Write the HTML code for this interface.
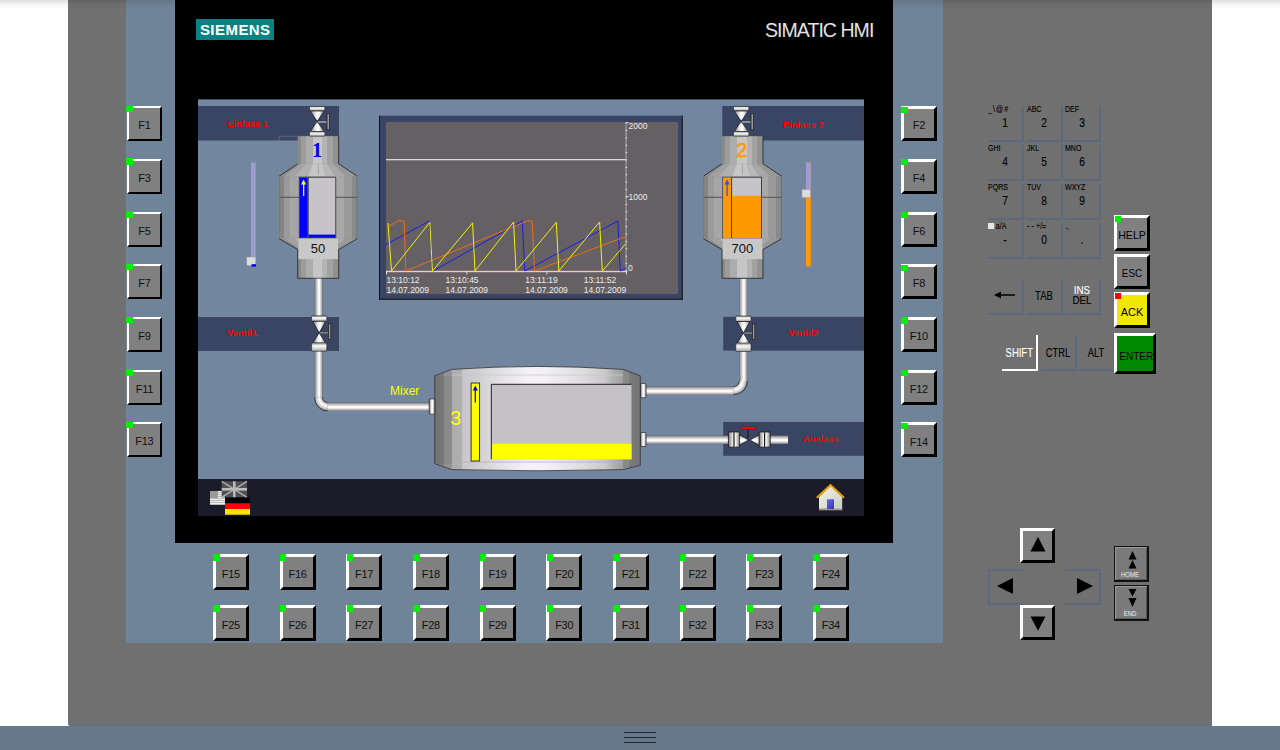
<!DOCTYPE html>
<html><head><meta charset="utf-8"><style>
*{margin:0;padding:0;box-sizing:border-box}
html,body{width:1280px;height:750px;overflow:hidden;background:#fff;font-family:"Liberation Sans",sans-serif}
.abs{position:absolute}
.fk{position:absolute;width:36px;height:35.5px;background:#808080;border-style:solid;border-width:3px;border-color:#fff #000 #000 #fff;color:#111;font-size:11px;letter-spacing:-.3px;text-indent:-.3px;text-align:center;line-height:30px;padding-top:1.5px}
.fk i{position:absolute;left:-2.6px;top:-2.6px;width:6.2px;height:6.2px;background:#00f000}
.fk.r{height:35px;padding-top:1.2px}
.fk.l{width:35px;height:35px;padding-top:2px;border-width:2.5px 2.6px 2.6px 2.4px;line-height:31px}
.fk.l i{left:-3px;top:-2.5px;width:6.6px;height:6.6px}
.kp{position:absolute;width:36px;height:35.5px;border-right:2.2px solid #5b6a7c;border-bottom:2.5px solid #5b6a7c}
.kp .s{position:absolute;left:0;top:-1.2px;font-size:9px;line-height:9px;color:#000;-webkit-text-stroke-width:.12px;transform:scaleX(.78);transform-origin:0 0;white-space:nowrap}
.kp .d{position:absolute;left:0;width:34px;top:11px;font-size:12px;line-height:12px;color:#000;text-align:center;transform:scaleX(.85);-webkit-text-stroke-width:.12px}
.bt{position:absolute;width:36px;height:35.5px;background:#808080;border-style:solid;border-width:3px;border-color:#fff #000 #000 #fff;color:#000;font-size:11.5px;text-align:center}
.bt span{display:block;transform:scaleX(.82)}
</style></head><body>

<div class="abs" style="left:68px;top:0;width:1144px;height:726px;background:#707070;border-radius:0 0 0 2px"></div>
<div class="abs" style="left:126px;top:0;width:817px;height:643px;background:#6f8498"></div>
<div class="abs" style="left:175px;top:0;width:718px;height:543px;background:#000"></div>
<div class="abs" style="left:0;top:726px;width:1280px;height:24px;background:#667889"></div>
<div class="abs" style="left:624px;top:732px;width:32px;height:1.2px;background:#1e2834"></div>
<div class="abs" style="left:624px;top:737px;width:32px;height:1.2px;background:#1e2834"></div>
<div class="abs" style="left:624px;top:742px;width:32px;height:1.2px;background:#1e2834"></div>
<div class="abs" style="left:0;top:0;width:1280px;height:9px;background:linear-gradient(rgba(0,0,0,.12),rgba(0,0,0,.03) 55%,rgba(0,0,0,0))"></div>
<div class="abs" style="left:196px;top:19px;width:78px;height:21px;background:#078383;color:#fff;font-weight:bold;font-size:15px;line-height:22px;text-align:center;letter-spacing:.45px;text-indent:.5px">SIEMENS</div>
<div class="abs" style="left:765px;top:18px;width:120px;font-size:19.5px;line-height:24px;color:#e4e4e4;white-space:nowrap;letter-spacing:-.95px">SIMATIC HMI</div>
<div class="fk l" style="left:127.0px;top:106.2px"><i></i>F1</div>
<div class="fk r" style="left:901.0px;top:106.2px"><i></i>F2</div>
<div class="fk l" style="left:127.0px;top:158.9px"><i></i>F3</div>
<div class="fk r" style="left:901.0px;top:158.9px"><i></i>F4</div>
<div class="fk l" style="left:127.0px;top:211.6px"><i></i>F5</div>
<div class="fk r" style="left:901.0px;top:211.6px"><i></i>F6</div>
<div class="fk l" style="left:127.0px;top:264.3px"><i></i>F7</div>
<div class="fk r" style="left:901.0px;top:264.3px"><i></i>F8</div>
<div class="fk l" style="left:127.0px;top:317.0px"><i></i>F9</div>
<div class="fk r" style="left:901.0px;top:317.0px"><i></i>F10</div>
<div class="fk l" style="left:127.0px;top:369.7px"><i></i>F11</div>
<div class="fk r" style="left:901.0px;top:369.7px"><i></i>F12</div>
<div class="fk l" style="left:127.0px;top:422.4px"><i></i>F13</div>
<div class="fk r" style="left:901.0px;top:422.4px"><i></i>F14</div>
<div class="fk" style="left:213.0px;top:554.0px"><i></i>F15</div>
<div class="fk" style="left:213.0px;top:605.0px"><i></i>F25</div>
<div class="fk" style="left:279.7px;top:554.0px"><i></i>F16</div>
<div class="fk" style="left:279.7px;top:605.0px"><i></i>F26</div>
<div class="fk" style="left:346.3px;top:554.0px"><i></i>F17</div>
<div class="fk" style="left:346.3px;top:605.0px"><i></i>F27</div>
<div class="fk" style="left:413.0px;top:554.0px"><i></i>F18</div>
<div class="fk" style="left:413.0px;top:605.0px"><i></i>F28</div>
<div class="fk" style="left:479.7px;top:554.0px"><i></i>F19</div>
<div class="fk" style="left:479.7px;top:605.0px"><i></i>F29</div>
<div class="fk" style="left:546.4px;top:554.0px"><i></i>F20</div>
<div class="fk" style="left:546.4px;top:605.0px"><i></i>F30</div>
<div class="fk" style="left:613.0px;top:554.0px"><i></i>F21</div>
<div class="fk" style="left:613.0px;top:605.0px"><i></i>F31</div>
<div class="fk" style="left:679.7px;top:554.0px"><i></i>F22</div>
<div class="fk" style="left:679.7px;top:605.0px"><i></i>F32</div>
<div class="fk" style="left:746.4px;top:554.0px"><i></i>F23</div>
<div class="fk" style="left:746.4px;top:605.0px"><i></i>F33</div>
<div class="fk" style="left:813.0px;top:554.0px"><i></i>F24</div>
<div class="fk" style="left:813.0px;top:605.0px"><i></i>F34</div>
<svg class="abs" style="left:0;top:0" width="1280" height="750" viewBox="0 0 1280 750" font-family="Liberation Sans, sans-serif">
<defs>
<linearGradient id="pipeV" x1="0" x2="1" y1="0" y2="0">
 <stop offset="0" stop-color="#6c6c6c"/><stop offset=".15" stop-color="#a8a8a8"/><stop offset=".45" stop-color="#f4f4f4"/><stop offset=".6" stop-color="#ffffff"/><stop offset=".85" stop-color="#b8b8b8"/><stop offset="1" stop-color="#707070"/>
</linearGradient>
<linearGradient id="pipeH" x1="0" x2="0" y1="0" y2="1">
 <stop offset="0" stop-color="#6c6c6c"/><stop offset=".15" stop-color="#a8a8a8"/><stop offset=".45" stop-color="#f4f4f4"/><stop offset=".6" stop-color="#ffffff"/><stop offset=".85" stop-color="#b8b8b8"/><stop offset="1" stop-color="#707070"/>
</linearGradient>
<linearGradient id="neck" x1="0" x2="1">
 <stop offset="0" stop-color="#8a8a8a"/><stop offset=".08" stop-color="#8a8a8a"/><stop offset=".08" stop-color="#9c9c9c"/><stop offset=".2" stop-color="#9c9c9c"/><stop offset=".2" stop-color="#acacac"/><stop offset=".37" stop-color="#acacac"/><stop offset=".37" stop-color="#c6c6c6"/><stop offset=".6" stop-color="#c6c6c6"/><stop offset=".6" stop-color="#b4b4b4"/><stop offset=".72" stop-color="#b4b4b4"/><stop offset=".72" stop-color="#a2a2a2"/><stop offset=".86" stop-color="#a2a2a2"/><stop offset=".86" stop-color="#929292"/><stop offset="1" stop-color="#909090"/>
</linearGradient>
<linearGradient id="body" x1="0" x2="1">
 <stop offset="0" stop-color="#858585"/><stop offset=".06" stop-color="#858585"/><stop offset=".06" stop-color="#9a9a9a"/><stop offset=".14" stop-color="#9a9a9a"/><stop offset=".14" stop-color="#a6a6a6"/><stop offset=".26" stop-color="#a6a6a6"/><stop offset=".26" stop-color="#b0b0b0"/><stop offset=".74" stop-color="#b0b0b0"/><stop offset=".74" stop-color="#a8a8a8"/><stop offset=".83" stop-color="#a8a8a8"/><stop offset=".83" stop-color="#9a9a9a"/><stop offset=".93" stop-color="#9a9a9a"/><stop offset=".93" stop-color="#8a8a8a"/><stop offset="1" stop-color="#8a8a8a"/>
</linearGradient>
<linearGradient id="cone" x1="0" x2="1">
 <stop offset="0" stop-color="#8e8e8e"/><stop offset=".2" stop-color="#a4a4a4"/><stop offset=".35" stop-color="#b4b4b4"/><stop offset=".42" stop-color="#c8c8c8"/><stop offset=".62" stop-color="#c8c8c8"/><stop offset=".7" stop-color="#b4b4b4"/><stop offset=".85" stop-color="#a0a0a0"/><stop offset="1" stop-color="#8e8e8e"/>
</linearGradient>
<linearGradient id="mix" x1="0" x2="1">
 <stop offset="0" stop-color="#7a7a7a"/><stop offset=".045" stop-color="#7e7e7e"/><stop offset=".047" stop-color="#929292"/><stop offset=".083" stop-color="#949494"/><stop offset=".085" stop-color="#acacac"/><stop offset=".13" stop-color="#b0b0b0"/><stop offset=".133" stop-color="#c8c6ca"/><stop offset=".2" stop-color="#cecdd0"/><stop offset=".3" stop-color="#e0dee2"/><stop offset=".45" stop-color="#f4f2f6"/><stop offset=".55" stop-color="#f2f0f4"/><stop offset=".72" stop-color="#dedcde"/><stop offset=".83" stop-color="#cac8ca"/><stop offset=".87" stop-color="#b0b0b0"/><stop offset=".915" stop-color="#a0a0a0"/><stop offset=".918" stop-color="#8a8a8a"/><stop offset=".945" stop-color="#888"/><stop offset=".948" stop-color="#7a7a7a"/><stop offset="1" stop-color="#747474"/>
</linearGradient>
<linearGradient id="flange" x1="0" x2="1">
 <stop offset="0" stop-color="#777"/><stop offset=".4" stop-color="#eee"/><stop offset=".6" stop-color="#fff"/><stop offset="1" stop-color="#888"/>
</linearGradient>
<linearGradient id="flangeH" x1="0" x2="0" y1="0" y2="1">
 <stop offset="0" stop-color="#777"/><stop offset=".4" stop-color="#eee"/><stop offset=".6" stop-color="#fff"/><stop offset="1" stop-color="#888"/>
</linearGradient>
<linearGradient id="flangeH2" x1="0" x2="0" y1="0" y2="1"><stop offset="0" stop-color="#888"/><stop offset=".35" stop-color="#fafafa"/><stop offset=".6" stop-color="#e0e0e0"/><stop offset="1" stop-color="#999"/></linearGradient>
<linearGradient id="ukg" x1="0" x2="0" y1="0" y2="1"><stop offset="0" stop-color="#555"/><stop offset="1" stop-color="#444"/></linearGradient>
<linearGradient id="house" x1="0" x2="1" y1="0" y2="1"><stop offset="0" stop-color="#f4f4ec"/><stop offset="1" stop-color="#c8ccc0"/></linearGradient>
<linearGradient id="door" x1="0" x2="1" y1="0" y2="1"><stop offset="0" stop-color="#6a6af0"/><stop offset="1" stop-color="#3030b0"/></linearGradient>
</defs>
<rect x="198" y="99.4" width="666" height="379.6" fill="#7386a0"/>
<rect x="198" y="479" width="666" height="37" fill="#1b1b2a"/>
<rect x="198" y="106" width="141" height="34.5" fill="#3a4564"/>
<rect x="722.3" y="106" width="141.7" height="34.5" fill="#3a4564"/>
<rect x="198" y="317" width="141" height="34" fill="#3a4564"/>
<rect x="723.2" y="316.8" width="140.8" height="33.8" fill="#3a4564"/>
<rect x="723.2" y="422" width="140.8" height="33.8" fill="#3a4564"/>
<text x="227.5" y="127.3" font-size="9.3" font-weight="bold" fill="#f00">Einlass 1</text>
<text x="783" y="128" font-size="9.3" font-weight="bold" fill="#f00">Einlass 2</text>
<text x="227" y="336.2" font-size="9.3" font-weight="bold" fill="#f00">Ventil1</text>
<text x="788.3" y="335.8" font-size="9.3" font-weight="bold" fill="#f00">Ventil2</text>
<text x="803" y="442.2" font-size="9.3" font-weight="bold" fill="#f00">Auslass</text>
<rect x="379" y="115.7" width="303.7" height="184" fill="#3a4566"/>
<rect x="379" y="115.7" width="1" height="184" fill="#111"/>
<rect x="681.7" y="115.7" width="1" height="184" fill="#111"/>
<rect x="379" y="298.7" width="303.7" height="1" fill="#111"/>
<rect x="386" y="122" width="292" height="172" fill="#646064"/>
<rect x="386" y="159" width="240" height="1.3" fill="#d8d8d8"/>
<rect x="625.6" y="122.5" width="0.9" height="149" fill="#b8b8b8"/>
<rect x="625.6" y="122.5" width="1.6" height="1" fill="#e8e8e8"/>
<rect x="625.6" y="129.9" width="1.6" height="1" fill="#e8e8e8"/>
<rect x="625.6" y="137.3" width="1.6" height="1" fill="#e8e8e8"/>
<rect x="625.6" y="144.7" width="1.6" height="1" fill="#e8e8e8"/>
<rect x="625.6" y="152.1" width="1.6" height="1" fill="#e8e8e8"/>
<rect x="625.6" y="159.5" width="1.6" height="1" fill="#e8e8e8"/>
<rect x="625.6" y="166.9" width="1.6" height="1" fill="#e8e8e8"/>
<rect x="625.6" y="174.3" width="1.6" height="1" fill="#e8e8e8"/>
<rect x="625.6" y="181.7" width="1.6" height="1" fill="#e8e8e8"/>
<rect x="625.6" y="189.1" width="1.6" height="1" fill="#e8e8e8"/>
<rect x="625.6" y="196.5" width="1.6" height="1" fill="#e8e8e8"/>
<rect x="625.6" y="203.9" width="1.6" height="1" fill="#e8e8e8"/>
<rect x="625.6" y="211.3" width="1.6" height="1" fill="#e8e8e8"/>
<rect x="625.6" y="218.7" width="1.6" height="1" fill="#e8e8e8"/>
<rect x="625.6" y="226.1" width="1.6" height="1" fill="#e8e8e8"/>
<rect x="625.6" y="233.5" width="1.6" height="1" fill="#e8e8e8"/>
<rect x="625.6" y="240.9" width="1.6" height="1" fill="#e8e8e8"/>
<rect x="625.6" y="248.3" width="1.6" height="1" fill="#e8e8e8"/>
<rect x="625.6" y="255.7" width="1.6" height="1" fill="#e8e8e8"/>
<rect x="625.6" y="263.1" width="1.6" height="1" fill="#e8e8e8"/>
<rect x="625.6" y="270.5" width="1.6" height="1" fill="#e8e8e8"/>
<rect x="626" y="122.3" width="3" height="0.8" fill="#ddd"/>
<rect x="626" y="196.2" width="3" height="0.8" fill="#ddd"/>
<text x="628.5" y="129.2" font-size="8.5" fill="#ececec">2000</text>
<text x="628.5" y="199.8" font-size="8.5" fill="#ececec">1000</text>
<text x="628" y="271.2" font-size="8.5" fill="#ececec">0</text>
<rect x="386" y="270.8" width="240.5" height="1.4" fill="#f4c8c8"/>
<rect x="386" y="271" width="0.9" height="3.5" fill="#e8e8e8"/>
<rect x="466.4" y="271" width="0.9" height="3.5" fill="#e8e8e8"/>
<rect x="546.5" y="271" width="0.9" height="3.5" fill="#e8e8e8"/>
<rect x="626" y="271" width="0.9" height="3.5" fill="#e8e8e8"/>
<text x="386.5" y="283" font-size="8.5" fill="#ececec">13:10:12</text>
<text x="386.5" y="293" font-size="8.5" fill="#ececec">14.07.2009</text>
<text x="445.5" y="283" font-size="8.5" fill="#ececec">13:10:45</text>
<text x="445.5" y="293" font-size="8.5" fill="#ececec">14.07.2009</text>
<text x="525.3" y="283" font-size="8.5" fill="#ececec">13:11:19</text>
<text x="525.3" y="293" font-size="8.5" fill="#ececec">14.07.2009</text>
<text x="583.7" y="283" font-size="8.5" fill="#ececec">13:11:52</text>
<text x="583.7" y="293" font-size="8.5" fill="#ececec">14.07.2009</text>
<polyline points="386,244.6 429.2,221.1 433,271 522.3,221 524.8,271 617.8,221 620.3,271 626,268" fill="none" stroke="#1c1ce8" stroke-width="1.0" stroke-linejoin="round"/>
<polyline points="388,226.4 392,224.5 398,221 404,221 406,271 527,221 532.2,221 534.5,271 626,236.4" fill="none" stroke="#f06c14" stroke-width="1.0" stroke-linejoin="round"/>
<polyline points="388,223 391.5,271 429.8,222.3 432.5,271 472.6,222.9 475,271 513.6,222 516,271 556.3,222.3 558.8,271 599.6,222 602.3,271 626,243.4" fill="none" stroke="#f4f000" stroke-width="1.0" stroke-linejoin="round"/>
<rect x="314.6" y="278.7" width="8" height="39.30000000000001" fill="url(#pipeV)"/>
<rect x="314.6" y="350" width="8" height="47.60000000000002" fill="url(#pipeV)"/>
<rect x="327.5" y="402.5" width="103.5" height="8.5" fill="url(#pipeH)"/>
<radialGradient id="elb1" gradientUnits="userSpaceOnUse" cx="327.5" cy="397.5" r="13.5"><stop offset="0" stop-color="#777"/><stop offset=".37" stop-color="#8a8a8a"/><stop offset=".45" stop-color="#c8c8c8"/><stop offset=".62" stop-color="#ffffff"/><stop offset=".85" stop-color="#c4c4c4"/><stop offset="1" stop-color="#6a6a6a"/></radialGradient>
<path d="M314.6 397.5 A12.9 13.5 0 0 0 327.5 411 L327.5 402.5 A4.9 5 0 0 1 322.6 397.5Z" fill="url(#elb1)"/>
<path d="M314.6 397.5 A12.9 13.5 0 0 0 327.5 411 M327.5 402.5 A4.9 5 0 0 1 322.6 397.5" fill="none" stroke="#1a1a1a" stroke-width=".7"/>
<rect x="739.3" y="278.7" width="8" height="39.30000000000001" fill="url(#pipeV)"/>
<rect x="739.3" y="350" width="8" height="31.100000000000023" fill="url(#pipeV)"/>
<rect x="644" y="386.5" width="89.5" height="8.5" fill="url(#pipeH)"/>
<radialGradient id="elb2" gradientUnits="userSpaceOnUse" cx="733.5" cy="381" r="14"><stop offset="0" stop-color="#777"/><stop offset=".38" stop-color="#8a8a8a"/><stop offset=".45" stop-color="#c8c8c8"/><stop offset=".62" stop-color="#ffffff"/><stop offset=".85" stop-color="#c4c4c4"/><stop offset="1" stop-color="#6a6a6a"/></radialGradient>
<path d="M747.5 381 A14 13.6 0 0 1 733.5 394.6 L733.5 386.5 A5.8 5.5 0 0 0 739.3 381Z" fill="url(#elb2)"/>
<path d="M747.5 381 A14 13.6 0 0 1 733.5 394.6 M733.5 386.5 A5.8 5.5 0 0 0 739.3 381" fill="none" stroke="#1a1a1a" stroke-width=".7"/>
<rect x="644" y="435.5" width="85" height="8.5" fill="url(#pipeH)"/>
<rect x="770" y="435.5" width="18" height="8.5" fill="url(#pipeH)"/>
<rect x="279.0" y="136.2" width="78.4" height="102.4" fill="none" stroke="#8a8a8a" stroke-width=".6" opacity=".7"/>
<g>
<linearGradient id="n318" gradientUnits="userSpaceOnUse" x1="297.7" x2="338.7" y1="0" y2="0"><stop offset="0" stop-color="#8a8a8a"/><stop offset=".08" stop-color="#8a8a8a"/><stop offset=".08" stop-color="#9c9c9c"/><stop offset=".2" stop-color="#9c9c9c"/><stop offset=".2" stop-color="#acacac"/><stop offset=".37" stop-color="#acacac"/><stop offset=".37" stop-color="#c6c6c6"/><stop offset=".6" stop-color="#c6c6c6"/><stop offset=".6" stop-color="#b4b4b4"/><stop offset=".72" stop-color="#b4b4b4"/><stop offset=".72" stop-color="#a2a2a2"/><stop offset=".86" stop-color="#a2a2a2"/><stop offset=".86" stop-color="#929292"/><stop offset="1" stop-color="#909090"/></linearGradient>
<linearGradient id="b318" gradientUnits="userSpaceOnUse" x1="279.0" x2="357.4" y1="0" y2="0"><stop offset="0" stop-color="#858585"/><stop offset=".06" stop-color="#858585"/><stop offset=".06" stop-color="#9a9a9a"/><stop offset=".14" stop-color="#9a9a9a"/><stop offset=".14" stop-color="#a6a6a6"/><stop offset=".26" stop-color="#a6a6a6"/><stop offset=".26" stop-color="#b0b0b0"/><stop offset=".74" stop-color="#b0b0b0"/><stop offset=".74" stop-color="#a8a8a8"/><stop offset=".83" stop-color="#a8a8a8"/><stop offset=".83" stop-color="#9a9a9a"/><stop offset=".93" stop-color="#9a9a9a"/><stop offset=".93" stop-color="#8a8a8a"/><stop offset="1" stop-color="#8a8a8a"/></linearGradient>
<rect x="297.7" y="136.2" width="41.0" height="27.600000000000023" fill="url(#n318)"/>
<rect x="297.7" y="249.5" width="41.0" height="28.80000000000001" fill="url(#n318)"/>
<path d="M297.70 163.8 L300.57 163.8 L284.49 176.3 L279.00 176.3Z" fill="#8e8e8e" stroke="#8e8e8e" stroke-width=".3"/>
<path d="M297.70 249.5 L300.57 249.5 L284.49 238.6 L279.00 238.6Z" fill="#8e8e8e" stroke="#8e8e8e" stroke-width=".3"/>
<path d="M300.57 163.8 L305.90 163.8 L294.68 176.3 L284.49 176.3Z" fill="#a2a2a2" stroke="#a2a2a2" stroke-width=".3"/>
<path d="M300.57 249.5 L305.90 249.5 L294.68 238.6 L284.49 238.6Z" fill="#a2a2a2" stroke="#a2a2a2" stroke-width=".3"/>
<path d="M305.90 163.8 L312.87 163.8 L308.01 176.3 L294.68 176.3Z" fill="#b0b0b0" stroke="#b0b0b0" stroke-width=".3"/>
<path d="M305.90 249.5 L312.87 249.5 L308.01 238.6 L294.68 238.6Z" fill="#b0b0b0" stroke="#b0b0b0" stroke-width=".3"/>
<path d="M312.87 163.8 L322.30 163.8 L326.04 176.3 L308.01 176.3Z" fill="#c6c6c6" stroke="#c6c6c6" stroke-width=".3"/>
<path d="M312.87 249.5 L322.30 249.5 L326.04 238.6 L308.01 238.6Z" fill="#c6c6c6" stroke="#c6c6c6" stroke-width=".3"/>
<path d="M322.30 163.8 L327.22 163.8 L335.45 176.3 L326.04 176.3Z" fill="#b8b8b8" stroke="#b8b8b8" stroke-width=".3"/>
<path d="M322.30 249.5 L327.22 249.5 L335.45 238.6 L326.04 238.6Z" fill="#b8b8b8" stroke="#b8b8b8" stroke-width=".3"/>
<path d="M327.22 163.8 L332.96 163.8 L346.42 176.3 L335.45 176.3Z" fill="#a8a8a8" stroke="#a8a8a8" stroke-width=".3"/>
<path d="M327.22 249.5 L332.96 249.5 L346.42 238.6 L335.45 238.6Z" fill="#a8a8a8" stroke="#a8a8a8" stroke-width=".3"/>
<path d="M332.96 163.8 L338.70 163.8 L357.40 176.3 L346.42 176.3Z" fill="#989898" stroke="#989898" stroke-width=".3"/>
<path d="M332.96 249.5 L338.70 249.5 L357.40 238.6 L346.42 238.6Z" fill="#989898" stroke="#989898" stroke-width=".3"/>
<rect x="279.0" y="176.3" width="78.4" height="62.29999999999998" fill="url(#b318)"/>
<rect x="317.9" y="163.8" width=".8" height="10.5" fill="#9a9a9a"/>
<path d="M338.7 136.2 L338.7 163.8 L357.4 176.3 M297.7 163.8 L279.0 176.3" fill="none" stroke="#2a2a2a" stroke-width=".9"/>
<path d="M357.4 238.6 L338.7 249.5 L338.7 278.3 L297.7 278.3 L297.7 249.5 L279.0 238.6" fill="none" stroke="#2a2a2a" stroke-width=".9"/>
<rect x="279.0" y="196.8" width="78.4" height=".9" fill="#4a4a4a"/>
<rect x="279.0" y="176.3" width=".8" height="62.29999999999998" fill="#777"/>
<rect x="356.59999999999997" y="176.3" width=".8" height="62.29999999999998" fill="#666"/>
<rect x="299.3" y="177.2" width="36.5" height="61.0" fill="#c6c4c8" stroke="#333" stroke-width=".9"/>
<rect x="299.7" y="177.6" width="8" height="60.2" fill="#0000ff"/>
<rect x="307.7" y="177.2" width=".9" height="61.0" fill="#222"/>
<rect x="308.5" y="234.6" width="26.9" height="3.1999999999999944" fill="#0000ff"/>
<path d="M303.6 179.6 L306.20000000000005 184.5 L301.0 184.5Z" fill="#ffff00"/><rect x="303.0" y="183" width="1.3" height="13" fill="#ffff00"/>
<rect x="298.4" y="238.4" width="39.6" height="20.7" fill="#c8c8c8"/>
<text x="318.09999999999997" y="253" font-size="13" fill="#111" text-anchor="middle">50</text>
<text x="317.09999999999997" y="157.3" font-size="20.5" font-weight="bold" font-family="Liberation Serif, serif" fill="#0000f4" text-anchor="middle">1</text>
</g>
<g>
<linearGradient id="n742" gradientUnits="userSpaceOnUse" x1="722.0" x2="763.0" y1="0" y2="0"><stop offset="0" stop-color="#8a8a8a"/><stop offset=".08" stop-color="#8a8a8a"/><stop offset=".08" stop-color="#9c9c9c"/><stop offset=".2" stop-color="#9c9c9c"/><stop offset=".2" stop-color="#acacac"/><stop offset=".37" stop-color="#acacac"/><stop offset=".37" stop-color="#c6c6c6"/><stop offset=".6" stop-color="#c6c6c6"/><stop offset=".6" stop-color="#b4b4b4"/><stop offset=".72" stop-color="#b4b4b4"/><stop offset=".72" stop-color="#a2a2a2"/><stop offset=".86" stop-color="#a2a2a2"/><stop offset=".86" stop-color="#929292"/><stop offset="1" stop-color="#909090"/></linearGradient>
<linearGradient id="b742" gradientUnits="userSpaceOnUse" x1="703.3" x2="781.7" y1="0" y2="0"><stop offset="0" stop-color="#858585"/><stop offset=".06" stop-color="#858585"/><stop offset=".06" stop-color="#9a9a9a"/><stop offset=".14" stop-color="#9a9a9a"/><stop offset=".14" stop-color="#a6a6a6"/><stop offset=".26" stop-color="#a6a6a6"/><stop offset=".26" stop-color="#b0b0b0"/><stop offset=".74" stop-color="#b0b0b0"/><stop offset=".74" stop-color="#a8a8a8"/><stop offset=".83" stop-color="#a8a8a8"/><stop offset=".83" stop-color="#9a9a9a"/><stop offset=".93" stop-color="#9a9a9a"/><stop offset=".93" stop-color="#8a8a8a"/><stop offset="1" stop-color="#8a8a8a"/></linearGradient>
<rect x="722.0" y="136.2" width="41.0" height="27.600000000000023" fill="url(#n742)"/>
<rect x="722.0" y="249.5" width="41.0" height="28.80000000000001" fill="url(#n742)"/>
<path d="M722.00 163.8 L724.87 163.8 L708.79 176.3 L703.30 176.3Z" fill="#8e8e8e" stroke="#8e8e8e" stroke-width=".3"/>
<path d="M722.00 249.5 L724.87 249.5 L708.79 238.6 L703.30 238.6Z" fill="#8e8e8e" stroke="#8e8e8e" stroke-width=".3"/>
<path d="M724.87 163.8 L730.20 163.8 L718.98 176.3 L708.79 176.3Z" fill="#a2a2a2" stroke="#a2a2a2" stroke-width=".3"/>
<path d="M724.87 249.5 L730.20 249.5 L718.98 238.6 L708.79 238.6Z" fill="#a2a2a2" stroke="#a2a2a2" stroke-width=".3"/>
<path d="M730.20 163.8 L737.17 163.8 L732.31 176.3 L718.98 176.3Z" fill="#b0b0b0" stroke="#b0b0b0" stroke-width=".3"/>
<path d="M730.20 249.5 L737.17 249.5 L732.31 238.6 L718.98 238.6Z" fill="#b0b0b0" stroke="#b0b0b0" stroke-width=".3"/>
<path d="M737.17 163.8 L746.60 163.8 L750.34 176.3 L732.31 176.3Z" fill="#c6c6c6" stroke="#c6c6c6" stroke-width=".3"/>
<path d="M737.17 249.5 L746.60 249.5 L750.34 238.6 L732.31 238.6Z" fill="#c6c6c6" stroke="#c6c6c6" stroke-width=".3"/>
<path d="M746.60 163.8 L751.52 163.8 L759.75 176.3 L750.34 176.3Z" fill="#b8b8b8" stroke="#b8b8b8" stroke-width=".3"/>
<path d="M746.60 249.5 L751.52 249.5 L759.75 238.6 L750.34 238.6Z" fill="#b8b8b8" stroke="#b8b8b8" stroke-width=".3"/>
<path d="M751.52 163.8 L757.26 163.8 L770.72 176.3 L759.75 176.3Z" fill="#a8a8a8" stroke="#a8a8a8" stroke-width=".3"/>
<path d="M751.52 249.5 L757.26 249.5 L770.72 238.6 L759.75 238.6Z" fill="#a8a8a8" stroke="#a8a8a8" stroke-width=".3"/>
<path d="M757.26 163.8 L763.00 163.8 L781.70 176.3 L770.72 176.3Z" fill="#989898" stroke="#989898" stroke-width=".3"/>
<path d="M757.26 249.5 L763.00 249.5 L781.70 238.6 L770.72 238.6Z" fill="#989898" stroke="#989898" stroke-width=".3"/>
<rect x="703.3" y="176.3" width="78.4" height="62.29999999999998" fill="url(#b742)"/>
<rect x="742.2" y="163.8" width=".8" height="10.5" fill="#9a9a9a"/>
<path d="M763.0 136.2 L763.0 163.8 L781.7 176.3 M722.0 163.8 L703.3 176.3" fill="none" stroke="#2a2a2a" stroke-width=".9"/>
<path d="M781.7 238.6 L763.0 249.5 L763.0 278.3 L722.0 278.3 L722.0 249.5 L703.3 238.6" fill="none" stroke="#2a2a2a" stroke-width=".9"/>
<rect x="703.3" y="196.8" width="78.4" height=".9" fill="#4a4a4a"/>
<rect x="703.3" y="176.3" width=".8" height="62.29999999999998" fill="#777"/>
<rect x="780.9000000000001" y="176.3" width=".8" height="62.29999999999998" fill="#666"/>
<rect x="722.8" y="177.2" width="38.700000000000045" height="61.0" fill="#c6c4c8" stroke="#333" stroke-width=".9"/>
<rect x="723.1999999999999" y="177.6" width="8" height="60.2" fill="#ff9900"/>
<rect x="731.1999999999999" y="177.2" width=".9" height="61.0" fill="#222"/>
<rect x="732.0" y="195.8" width="29.100000000000044" height="41.99999999999998" fill="#ff9900"/>
<path d="M727.0999999999999 179.6 L729.6999999999999 184.5 L724.4999999999999 184.5Z" fill="#1a5cff"/><rect x="726.4999999999999" y="183" width="1.3" height="13" fill="#1a5cff"/>
<rect x="722.7" y="238.4" width="39.6" height="20.7" fill="#c8c8c8"/>
<text x="742.4" y="253" font-size="13" fill="#111" text-anchor="middle">700</text>
<text x="741.9" y="157.4" font-size="20" fill="#ff9a00" stroke="#ff9a00" stroke-width=".55" text-anchor="middle">2</text>
</g>
<rect x="314.6" y="278.7" width="8" height="2.3000000000000114" fill="url(#pipeV)"/>
<rect x="251" y="162.4" width="4.7" height="103" fill="#a09cd0"/>
<rect x="246.8" y="257" width="8.9" height="8.5" fill="#dcdcdc" stroke="#999" stroke-width=".5"/>
<rect x="251.5" y="264.2" width="4.5" height="2.4" fill="#0000f0"/>
<rect x="806" y="162.5" width="4.8" height="104" fill="#ff9900"/>
<rect x="806" y="162.5" width="4.8" height="31" fill="#a09cd0"/>
<rect x="802" y="189.6" width="8.4" height="8" fill="#dcdcdc" stroke="#999" stroke-width=".5"/>
<rect x="309.59999999999997" y="106.3" width="15.2" height="4.6" rx=".8" fill="url(#flangeH2)" stroke="#222" stroke-width=".6"/>
<path d="M310.2 111 L324.2 111 L317.2 121.3 Z" fill="url(#flange)" stroke="#111" stroke-width=".7"/>
<path d="M310.2 131.6 L324.2 131.6 L317.2 121.3 Z" fill="url(#flange)" stroke="#111" stroke-width=".7"/>
<rect x="309.59999999999997" y="131.6" width="15.2" height="4.6" rx=".8" fill="url(#flangeH2)" stroke="#333" stroke-width=".6"/>
<rect x="317.7" y="121" width="9.300000000000011" height="2" fill="#a8a8a8" stroke="#333" stroke-width=".4"/>
<rect x="327" y="113.7" width="2.6" height="16.2" fill="#9a9a9a" stroke="#111" stroke-width=".7"/>
<rect x="733.6" y="106.3" width="15.2" height="4.6" rx=".8" fill="url(#flangeH2)" stroke="#222" stroke-width=".6"/>
<path d="M734.2 111 L748.2 111 L741.2 121.3 Z" fill="url(#flange)" stroke="#111" stroke-width=".7"/>
<path d="M734.2 131.6 L748.2 131.6 L741.2 121.3 Z" fill="url(#flange)" stroke="#111" stroke-width=".7"/>
<rect x="733.6" y="131.6" width="15.2" height="4.6" rx=".8" fill="url(#flangeH2)" stroke="#333" stroke-width=".6"/>
<rect x="741.7" y="121" width="9.299999999999955" height="2" fill="#a8a8a8" stroke="#333" stroke-width=".4"/>
<rect x="751" y="113.7" width="2.6" height="16.2" fill="#9a9a9a" stroke="#111" stroke-width=".7"/>
<rect x="311.59999999999997" y="315.8" width="15.2" height="5.5" rx=".8" fill="url(#flangeH2)" stroke="#222" stroke-width=".6"/>
<path d="M312.7 321.3 L325.7 321.3 L319.2 332.8 Z" fill="url(#flange)" stroke="#111" stroke-width=".7"/>
<path d="M312.7 343.3 L325.7 343.3 L319.2 332.8 Z" fill="url(#flange)" stroke="#111" stroke-width=".7"/>
<rect x="311.59999999999997" y="342.8" width="15.2" height="8.5" rx=".8" fill="url(#flangeH2)" stroke="#222" stroke-width=".6"/>
<rect x="319.7" y="332.1" width="8.900000000000034" height="1.6" fill="#a8a8a8" stroke="#333" stroke-width=".4"/>
<rect x="328.6" y="323.8" width="2.2" height="15.5" fill="#9a9a9a" stroke="#111" stroke-width=".6"/>
<rect x="735.8" y="316" width="15.2" height="5.5" rx=".8" fill="url(#flangeH2)" stroke="#222" stroke-width=".6"/>
<path d="M736.9 321.5 L749.9 321.5 L743.4 333 Z" fill="url(#flange)" stroke="#111" stroke-width=".7"/>
<path d="M736.9 343.5 L749.9 343.5 L743.4 333 Z" fill="url(#flange)" stroke="#111" stroke-width=".7"/>
<rect x="735.8" y="343" width="15.2" height="8.5" rx=".8" fill="url(#flangeH2)" stroke="#222" stroke-width=".6"/>
<rect x="743.9" y="332.3" width="8.700000000000045" height="1.6" fill="#a8a8a8" stroke="#333" stroke-width=".4"/>
<rect x="752.6" y="324" width="2.2" height="15.5" fill="#9a9a9a" stroke="#111" stroke-width=".6"/>
<rect x="728.4" y="432" width="11.2" height="15.2" rx="1.2" fill="url(#flange)" stroke="#111" stroke-width=".8"/>
<rect x="733.4" y="432.3" width="1.2" height="14.6" fill="#151515"/>
<rect x="759" y="432" width="11.2" height="15.2" rx="1.2" fill="url(#flange)" stroke="#111" stroke-width=".8"/>
<rect x="764" y="432.3" width="1.2" height="14.6" fill="#151515"/>
<path d="M739.4 434.7 L739.4 445.3 L748.4 440Z" fill="url(#flangeH)" stroke="#111" stroke-width=".7"/>
<path d="M759 434.7 L759 445.3 L750 440Z" fill="url(#flangeH)" stroke="#111" stroke-width=".7"/>
<rect x="747.3" y="428.5" width="1.4" height="10" fill="#222"/>
<rect x="741.6" y="426.8" width="14.5" height="2.3" fill="#f00" stroke="#222" stroke-width=".3"/>
<path d="M434.8 375.8 L451.6 369.4 Q537 363.5 623 369.4 L640.3 375.8 L640.3 465.4 L623 469.6 Q537 472 451.6 469.6 L434.8 463.8Z" fill="url(#mixg)" stroke="#333" stroke-width=".8"/>
<linearGradient id="mixg" gradientUnits="userSpaceOnUse" x1="434.8" x2="640.3" y1="0" y2="0"><stop offset="0" stop-color="#7a7a7a"/><stop offset=".045" stop-color="#7e7e7e"/><stop offset=".047" stop-color="#929292"/><stop offset=".083" stop-color="#949494"/><stop offset=".085" stop-color="#acacac"/><stop offset=".13" stop-color="#b0b0b0"/><stop offset=".133" stop-color="#c8c6ca"/><stop offset=".2" stop-color="#cecdd0"/><stop offset=".3" stop-color="#e0dee2"/><stop offset=".45" stop-color="#f4f2f6"/><stop offset=".55" stop-color="#f2f0f4"/><stop offset=".72" stop-color="#dedcde"/><stop offset=".83" stop-color="#cac8ca"/><stop offset=".87" stop-color="#b0b0b0"/><stop offset=".915" stop-color="#a0a0a0"/><stop offset=".918" stop-color="#8a8a8a"/><stop offset=".945" stop-color="#888"/><stop offset=".948" stop-color="#7a7a7a"/><stop offset="1" stop-color="#747474"/></linearGradient>
<path d="M451.6 375 L623 375" stroke="#c8c8c8" stroke-width=".8"/>
<path d="M451.6 462 L623 462" stroke="#b0b0b0" stroke-width=".8"/>
<rect x="434.8" y="375.8" width="17" height="88" fill="#000" opacity=".06"/>
<rect x="491.3" y="384.3" width="140.2" height="75" fill="#c4c2c6"/>
<rect x="491.8" y="443.8" width="139.7" height="15.5" fill="#ffff00"/>
<path d="M491.3 459.3 L491.3 384.3 L631.5 384.3" fill="none" stroke="#222" stroke-width="1"/>
<rect x="471.1" y="383" width="8.5" height="78" fill="#ffff00" stroke="#222" stroke-width=".9"/>
<path d="M475.3 385.5 L477.8 390.5 L472.8 390.5Z" fill="#0000e0"/><rect x="474.7" y="389" width="1.2" height="13.5" fill="#0000e0"/>
<text x="455.7" y="425.4" font-size="19.5" fill="#ffff00" text-anchor="middle">3</text>
<text x="390" y="395" font-size="12" fill="#ffff00">Mixer</text>
<rect x="429.2" y="399" width="5.6" height="15.199999999999989" rx="1.2" fill="url(#flange)" stroke="#222" stroke-width=".7"/>
<rect x="640.5" y="383.5" width="5.6" height="14.300000000000011" rx="1.2" fill="url(#flange)" stroke="#222" stroke-width=".7"/>
<rect x="640.5" y="432.5" width="5.6" height="14.0" rx="1.2" fill="url(#flange)" stroke="#222" stroke-width=".7"/>
<rect x="210" y="491" width="15" height="14" fill="#bbb"/>
<rect x="210" y="491" width="15" height="1" fill="#eee"/>
<rect x="210" y="493" width="15" height="1" fill="#eee"/>
<rect x="210" y="495" width="15" height="1" fill="#eee"/>
<rect x="210" y="497" width="15" height="1" fill="#eee"/>
<rect x="210" y="499" width="15" height="1" fill="#eee"/>
<rect x="210" y="501" width="15" height="1" fill="#eee"/>
<rect x="210" y="503" width="15" height="1" fill="#eee"/>
<rect x="210" y="491" width="8" height="7" fill="#9a9a9a"/>
<rect x="221.7" y="481.3" width="25.3" height="16" fill="#505050"/>
<path d="M221.7 481.3 L247 497.3 M247 481.3 L221.7 497.3" stroke="#aaa" stroke-width="1.5"/>
<rect x="221.7" y="488" width="25.3" height="2.6" fill="#bbb"/><rect x="233" y="481.3" width="2.6" height="16" fill="#bbb"/>
<rect x="225" y="497.6" width="25" height="5.7" fill="#000"/><rect x="225" y="503.3" width="25" height="5.7" fill="#f00"/><rect x="225" y="509" width="25" height="5.7" fill="#ffe400"/>
<path d="M819 497 L830.5 486 L842.2 497 L842.2 510 L819 510Z" fill="url(#house)"/>
<rect x="819" y="508.5" width="23.2" height="1.8" fill="#9a9c90"/>
<path d="M816.8 497.8 L830.5 485 L844 497.8" fill="none" stroke="#f0a000" stroke-width="2"/>
<rect x="827" y="499.3" width="7" height="9.7" fill="url(#door)"/>
</svg>
<div class="kp" style="left:988px;top:106.4px"><span class="s"><span style="letter-spacing:1.4px">_\@#</span></span><span class="d">1</span></div>
<div class="kp" style="left:1026.7px;top:106.4px"><span class="s">ABC</span><span class="d">2</span></div>
<div class="kp" style="left:1065.3px;top:106.4px"><span class="s">DEF</span><span class="d">3</span></div>
<div class="kp" style="left:988px;top:145.35px"><span class="s">GHI</span><span class="d">4</span></div>
<div class="kp" style="left:1026.7px;top:145.35px"><span class="s">JKL</span><span class="d">5</span></div>
<div class="kp" style="left:1065.3px;top:145.35px"><span class="s">MNO</span><span class="d">6</span></div>
<div class="kp" style="left:988px;top:184.3px"><span class="s">PQRS</span><span class="d">7</span></div>
<div class="kp" style="left:1026.7px;top:184.3px"><span class="s">TUV</span><span class="d">8</span></div>
<div class="kp" style="left:1065.3px;top:184.3px"><span class="s">WXYZ</span><span class="d">9</span></div>
<div class="kp" style="left:988px;top:223.3px"><span class="s"><b style="display:inline-block;width:8px;height:6.2px;background:#e8e8e0;margin-right:2px;vertical-align:0px"></b>a/A</span><span class="d">-</span></div>
<div class="kp" style="left:1026.7px;top:223.3px"><span class="s"><span style="letter-spacing:2.8px">--</span>+/=</span><span class="d">0</span></div>
<div class="kp" style="left:1065.3px;top:223.3px"><span class="s">.,</span><span class="d">.</span></div>
<div class="kp" style="left:988px;top:279.1px"><svg class="abs" style="left:6px;top:12px" width="22" height="8"><path d="M0 4 L7 0.5 L7 3.2 L21 3.2 L21 4.8 L7 4.8 L7 7.5Z" fill="#000"/></svg></div>
<div class="kp" style="left:1026.7px;top:279.1px"><span class="d" style="top:11px;transform:scaleX(.79)">TAB</span></div>
<div class="kp" style="left:1065.3px;top:279.1px"><span class="d" style="top:5.5px;line-height:10.5px;font-size:11.5px"><span style="color:#fff">INS</span><br>DEL</span></div>
<div class="kp" style="left:1002px;top:335.1px;border-color:#fff"><span class="d" style="top:12px;color:#fff;transform:scaleX(.79)">SHIFT</span></div>
<div class="kp" style="left:1041px;top:335.1px"><span class="d" style="top:12px;transform:scaleX(.775)">CTRL</span></div>
<div class="kp" style="left:1079px;top:335.1px"><span class="d" style="top:12px;transform:scaleX(.785)">ALT</span></div>
<div class="bt" style="left:1114px;top:215.2px"><i style="position:absolute;left:-2px;top:-2px;width:6px;height:6px;background:#00f000"></i><span style="margin-top:10.5px;transform:scaleX(.92)">HELP</span></div>
<div class="bt" style="left:1114px;top:253.6px"><span style="margin-top:10.5px;transform:scaleX(.86)">ESC</span></div>
<div class="bt" style="left:1114px;top:292px;background:#f0e800"><i style="position:absolute;left:-2px;top:-2px;width:6px;height:6px;background:#f00"></i><span style="margin-top:10.5px;transform:scaleX(.95)">ACK</span></div>
<div class="bt" style="left:1114px;top:333px;width:42px;height:41px;background:#008a00"><span style="margin-top:13.5px;transform:scaleX(.87)">ENTER</span></div>
<div class="bt" style="left:1019.5px;top:527.8px;width:35px;height:35px"><svg class="abs" style="left:7.3px;top:4.4px" width="17" height="17"><path d="M8 1.7 L15.5 16.4 L0.5 16.4Z" fill="#000"/></svg></div>
<div class="bt" style="left:1019.5px;top:605px;width:35px;height:35px"><svg class="abs" style="left:7.3px;top:7.5px" width="17" height="17"><path d="M8 14.8 L15.5 0.5 L0.5 0.5Z" fill="#000"/></svg></div>
<div class="abs" style="left:988px;top:569px;width:35px;height:35.5px;border:2px solid #5b6a7c;border-right:none"></div>
<div class="abs" style="left:1065px;top:569px;width:36px;height:35.5px;border:2px solid #5b6a7c;border-left:none"></div>
<svg class="abs" style="left:996px;top:577px" width="18" height="18"><path d="M1 9 L17 1 L17 17Z" fill="#000"/></svg>
<svg class="abs" style="left:1076px;top:577px" width="18" height="18"><path d="M17 9 L1 1 L1 17Z" fill="#000"/></svg>
<div style="position:absolute;width:35px;height:35.5px;background:#7a7a7a;border:1.5px solid #111;border-right-width:2.2px;border-bottom-width:2.4px;box-shadow:inset 1px 1px 0 #9a9a9a,inset -1px -1px 0 #5a5a5a;left:1114.3px;top:546px"><svg class="abs" style="left:11.5px;top:2.5px" width="12" height="20"><path d="M5.5 1 L9.5 9.5 L1.5 9.5Z M5.5 10 L9.5 18.5 L1.5 18.5Z" fill="#000"/></svg><span class="abs" style="left:-1.5px;width:32px;top:23.5px;font-size:7px;color:#eee;text-align:center;transform:scaleX(.85)">HOME</span></div>
<div style="position:absolute;width:35px;height:35.5px;background:#7a7a7a;border:1.5px solid #111;border-right-width:2.2px;border-bottom-width:2.4px;box-shadow:inset 1px 1px 0 #9a9a9a,inset -1px -1px 0 #5a5a5a;left:1114.3px;top:585px"><svg class="abs" style="left:11.5px;top:2px" width="12" height="20"><path d="M1.5 1 L9.5 1 L5.5 8.5Z M1.5 10 L9.5 10 L5.5 19Z" fill="#000"/></svg><span class="abs" style="left:-1.5px;width:32px;top:23.5px;font-size:7px;color:#eee;text-align:center;transform:scaleX(.85)">END</span></div>
</body></html>
